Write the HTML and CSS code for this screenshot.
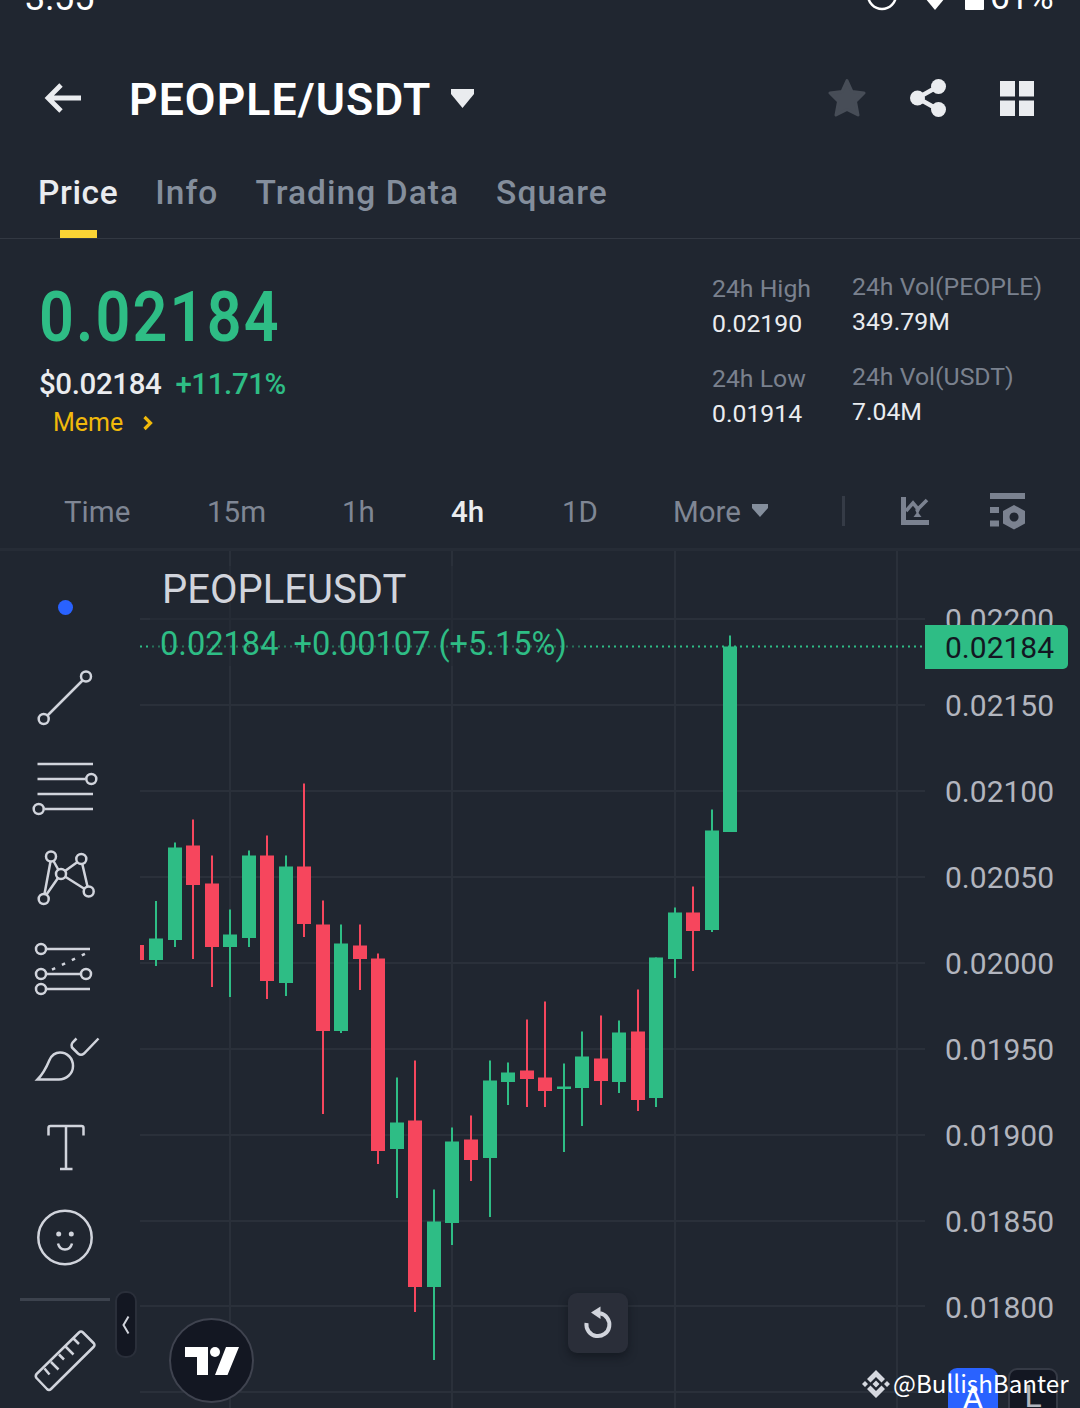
FILE: index.html
```html
<!DOCTYPE html>
<html lang="en">
<head>
    <meta charset="UTF-8">
    <meta name="viewport" content="width=device-width, initial-scale=1.0">
    <title>PEOPLE/USDT</title>
    <link rel="stylesheet" href="styles.css">
</head>
<body>
    <div class="status-bar">
        <span class="clock">3:55</span>
        <svg class="status-icons" width="120" height="12" viewBox="866 0 120 12">
            <circle cx="882" cy="-5" r="14" fill="none" stroke="#fff" stroke-width="2.5"/>
            <path d="M925 -2h20l-10 12z" fill="#fff"/>
            <path d="M965 -10h19v19q0 1-1 1h-17q-1 0-1-1z" fill="#fff"/>
        </svg>
        <span class="battery">61%</span>
    </div>

    <header class="header">
        <svg class="back" width="38" height="32" viewBox="0 0 38 32">
            <path d="M17 3L4 16l13 13M4 16h33" fill="none" stroke="#eaecef" stroke-width="4.8"/>
        </svg>
        <h1>PEOPLE/USDT</h1>
        <svg class="caret" width="23" height="19" viewBox="0 0 23 19"><path d="M0 0h23v5L11.500 19 0 5z" fill="#eaecef"/></svg>
        <div class="actions">
            <svg width="38" height="40" viewBox="0 0 38 40">
                <path d="M19 2.500l5 11 12 1.500-8.500 8.500 2.500 13.500-11-5.500-11 5.500 2.500-13.500L2 15l12-1.500z" fill="#474d57" stroke="#474d57" stroke-width="3" stroke-linejoin="round"/>
            </svg>
            <svg width="36" height="38" viewBox="0 0 36 38">
                <path d="M28 7.500L7.500 19 28 30.500" fill="none" stroke="#eaecef" stroke-width="4.500"/>
                <g fill="#eaecef"><circle cx="28.500" cy="7.500" r="7.500"/><circle cx="7.500" cy="19" r="7.500"/><circle cx="28.500" cy="30.500" r="7.500"/></g>
            </svg>
            <svg width="34" height="35" viewBox="0 0 34 35">
                <path d="M0 0h15v15.500H0zM19 0h15v15.500H19zM0 19.500h15V35H0zM19 19.500h15V35H19z" fill="#eaecef"/>
            </svg>
        </div>
    </header>

    <nav class="tabs">
        <span class="tab active">Price</span>
        <span class="tab">Info</span>
        <span class="tab">Trading Data</span>
        <span class="tab">Square</span>
    </nav>

    <section class="ticker">
        <div class="price-block">
            <div class="last-price">0.02184</div>
            <div class="sub-price"><span class="usd">$0.02184</span><span class="change">+11.71%</span></div>
            <div class="tag">Meme
                <svg width="12" height="16" viewBox="0 0 12 16"><path d="M2.500 2l6 6-6 6" fill="none" stroke="#f0b90b" stroke-width="3.200"/></svg>
            </div>
        </div>
        <div class="stats">
            <div class="label">24h High</div>
            <div class="value">0.02190</div>
            <div class="label">24h Low</div>
            <div class="value">0.01914</div>
        </div>
        <div class="stats volume">
            <div class="label">24h Vol(PEOPLE)</div>
            <div class="value">349.79M</div>
            <div class="label">24h Vol(USDT)</div>
            <div class="value">7.04M</div>
        </div>
    </section>

    <div class="intervals">
        <span>Time</span>
        <span>15m</span>
        <span>1h</span>
        <span class="active">4h</span>
        <span>1D</span>
        <span class="more">More <svg width="16" height="13" viewBox="0 0 16 13"><path d="M0 0h16v4l-8 9-8-9z" fill="#848e9c"/></svg></span>
        <i class="divider"></i>
        <svg width="28" height="28" viewBox="0 0 28 28">
            <path d="M2.500 0v25.500H28" fill="none" stroke="#7b8290" stroke-width="5"/>
            <path d="M5 14l7-8 5 6 9-9" fill="none" stroke="#7b8290" stroke-width="3.600"/>
            <path d="M14 12.500h5l-1.500 3.500 3 4h-8l3-4z" fill="#7b8290"/>
        </svg>
        <svg width="35" height="37" viewBox="0 0 35 37">
            <path d="M0 0h35v6H0zM0 14h9v6H0zM0 27.500h9v6H0z" fill="#7b8290"/>
            <path fill-rule="evenodd" d="M24 12l11 6v12.500l-11 6-11-6V18zM24 19.500a4.500 4.500 0 1 0 .1 0z" fill="#7b8290"/>
        </svg>
    </div>

    <main class="chart">
        <div class="tools">
            <div class="dot"></div>
            <!-- trend line -->
            <svg viewBox="0 0 100 90"><circle cx="43.700" cy="66" r="5"/><circle cx="86" cy="23.500" r="5"/><path d="M47.500 62.500l35-35"/></svg>
            <!-- fib retracement -->
            <svg viewBox="0 0 100 90"><path d="M37.500 21H93M37.500 36h48M37.500 51H93M44.500 66H93"/><circle cx="91.300" cy="36" r="5"/><circle cx="38.700" cy="66" r="5"/></svg>
            <!-- pattern -->
            <svg viewBox="0 0 100 90">
                <path d="M50.500 28.500L44.500 61M53.500 28l5 9M58 45L46.500 61.500M65 38l12.500-9M82.300 31l5.200 22.500M65.300 43.700l19 12"/>
                <circle cx="51" cy="23.500" r="5"/><circle cx="81.300" cy="26" r="5"/><circle cx="61" cy="41" r="5"/><circle cx="43.700" cy="66" r="5"/><circle cx="88.700" cy="58.500" r="5"/>
            </svg>
            <!-- forecast -->
            <svg viewBox="0 0 100 90">
                <path d="M46.500 26H90M46.500 51h34M46.500 66H90"/>
                <path d="M52 46.700l33.500-16" stroke-dasharray="3.500 7.500"/>
                <circle cx="41" cy="26" r="5"/><circle cx="41" cy="51" r="5"/><circle cx="86" cy="51" r="5"/><circle cx="41" cy="66" r="5"/>
            </svg>
            <!-- brush -->
            <svg viewBox="0 0 100 90">
                <path d="M37.500 66.500C43 61 47 53 49.500 47c2.500-5.500 6.500-7.500 10.500-7.500 7 0 13 5.500 13 13.500s-7 13.500-14 13.500zM76.500 25.500L73 29q-3 3.500 0 6.500l5 5q3 2.500 6 0l14.500-15"/>
            </svg>
            <!-- text -->
            <svg viewBox="0 0 100 90"><path d="M48.500 32.500V25q0-2 2-2h31q2 0 2 2v7.500M66 23v43M60 66h12.500"/></svg>
            <!-- emoji -->
            <svg viewBox="0 0 100 90">
                <circle cx="65" cy="44.500" r="26.700"/><path d="M58 50.500c2 8 12 8 14 0"/>
                <g class="eyes"><circle cx="58.700" cy="41" r="2.500"/><circle cx="71.300" cy="41" r="2.500"/></g>
            </svg>
            <hr>
            <!-- ruler -->
            <svg viewBox="0 0 100 90">
                <path d="M79 17.500q2-2 4 0l10.500 10.500q2 2 0 4L51 74q-2 2-4 0L36.500 63q-1.500-1.500 0-4zM44.500 53.500l5 6M51 47l7.500 7.500M59 39.500l5 5M66 32l7.500 7.500M74 24l5 5"/>
            </svg>
        </div>

        <div class="plot">
            <svg id="candles" width="785" height="857" viewBox="140 551 785 857"></svg>
            <div class="legend">
                <div class="symbol">PEOPLEUSDT</div>
                <div class="ohlc"><span>0.02184</span><span>+0.00107</span><span class="percent">(+5.15%)</span></div>
            </div>
            <div class="collapse"><svg width="10" height="20" viewBox="0 0 10 20"><path d="M7.500 1.500L2.500 10l5 8.500" fill="none" stroke="#d1d4dc" stroke-width="2"/></svg></div>
            <div class="tv-logo">
                <svg width="54" height="28" viewBox="0 0 54 28"><path d="M0 0h23v28H12V10H0zM41 0h13L42.500 28H30z" fill="#fff"/><circle cx="30" cy="5" r="5" fill="#fff"/></svg>
            </div>
            <div class="reset">
                <svg width="30" height="34" viewBox="0 0 30 34"><path d="M17 7.300A11.500 11.500 0 1 1 3.500 17" fill="none" stroke="#d1d4dc" stroke-width="4"/><path d="M17.500 0.500v12.500L8 6.500z" fill="#d1d4dc"/></svg>
            </div>
        </div>

        <div class="axis">
            <span>0.02200</span>
            <span>0.02150</span>
            <span>0.02100</span>
            <span>0.02050</span>
            <span>0.02000</span>
            <span>0.01950</span>
            <span>0.01900</span>
            <span>0.01850</span>
            <span>0.01800</span>
            <div class="last">0.02184</div>
            <div class="scale auto">A</div>
            <div class="scale log">L</div>
        </div>

        <div class="credit">
            <svg width="28" height="28" viewBox="0 0 28 28">
                <path d="M14 0l9 9-3.500 3.500L14 7l-5.500 5.500L5 9zM14 28l9-9-3.500-3.500L14 21l-5.500-5.500L5 19zM14 10.500l3.500 3.500-3.500 3.500-3.500-3.500zM3 11l3 3-3 3-3-3zM25 11l3 3-3 3-3-3z" fill="#d5d8df"/>
            </svg>
            <span>@BullishBanter</span>
        </div>
    </main>

    <script>
        const GREEN = '#2ebd85';
        const RED = '#f6465d';

        // [center x, wick top, wick bottom, body top, body bottom, up]
        const candles = [
            [137, 945, 960, 945, 960, 0],
            [156, 901, 966, 938.5, 960, 1],
            [175, 842.5, 947, 847.5, 940, 1],
            [193, 819.5, 959, 845.5, 885, 0],
            [212, 855.5, 987, 883.5, 947, 0],
            [230, 909.5, 997, 934.5, 947, 1],
            [249, 850.5, 947, 855.5, 938, 1],
            [267, 835.5, 999, 855.5, 981, 0],
            [286, 855.5, 996, 866.5, 983, 1],
            [304, 783.5, 937, 866.5, 924, 0],
            [323, 900.5, 1114, 924.5, 1031, 0],
            [341, 924.5, 1033, 943.5, 1031, 1],
            [360, 924.5, 990, 945.5, 959, 0],
            [378, 953.5, 1164, 958.5, 1151, 0],
            [397, 1077.5, 1198, 1122.5, 1149, 1],
            [415, 1060.5, 1312, 1120.5, 1287, 0],
            [434, 1189.5, 1360, 1221.5, 1287, 1],
            [452, 1127.5, 1245, 1141.5, 1223, 1],
            [471, 1115.5, 1181, 1139.5, 1160, 0],
            [490, 1060.5, 1217, 1080.5, 1158, 1],
            [508, 1062.5, 1105, 1072.5, 1082, 1],
            [527, 1019.5, 1107, 1070.5, 1079, 0],
            [545, 1001.5, 1107, 1077.5, 1091, 0],
            [564, 1063.5, 1152, 1086.5, 1089, 1],
            [582, 1031.5, 1126, 1056.5, 1088, 1],
            [601, 1015.5, 1105, 1058.5, 1081, 0],
            [619, 1020.5, 1093, 1032.5, 1082, 1],
            [638, 989.5, 1111, 1031.5, 1100, 0],
            [656, 957.5, 1107, 957.5, 1098, 1],
            [675, 907.5, 978, 912.5, 959, 1],
            [693, 886.5, 971, 912.5, 931, 0],
            [712, 809.5, 932, 830.5, 930, 1],
            [730, 635.5, 832, 646.5, 832, 1]
        ];

        function rect(x, y, w, h, fill) {
            return `<rect x="${x}" y="${y}" width="${w}" height="${h}" fill="${fill}"/>`;
        }

        let out = '';
        // grid
        [618, 704, 790, 876, 962, 1048, 1134, 1220, 1305, 1391].forEach(y => out += rect(140, y, 785, 2, '#2a303a'));
        [229, 451, 674, 896].forEach(x => out += rect(x, 549, 2, 859, '#2a303a'));

        candles.forEach(([x, high, low, top, bottom, up]) => {
            const color = up ? GREEN : RED;
            out += rect(x - 1, high, 2, low - high, color);
            out += rect(x - 7, top, 14, bottom - top, color);
        });

        // last price line
        out += `<path d="M140 646.5H925" stroke="${GREEN}" stroke-width="2" stroke-dasharray="2 4"/>`;
        document.getElementById('candles').innerHTML = out;
    </script>
</body>
</html>
```
FILE: styles.css
```css
* {
    box-sizing: border-box;
}

body {
    margin: 0;
    width: 1080px;
    height: 1408px;
    overflow: hidden;
    background-color: #202630;
    color: #eaecef;
    font-family: Roboto, "Liberation Sans", sans-serif;
}

svg {
    display: block;
    flex: none;
}

/* Status bar, partly scrolled off */
.status-bar {
    display: flex;
    height: 40px;
    padding-left: 25px;
    overflow: hidden;
    color: #fff;
    font-size: 36px;
    line-height: 40px;
}

.clock,
.battery {
    margin-top: -22px;
}

.clock {
    width: 841px;
}

.battery {
    margin-left: 4px;
    font-size: 35px;
    letter-spacing: -0.7px;
}

/* Header */
.header {
    display: flex;
    align-items: center;
    height: 116px;
    padding: 0 46px 0 44px;
}

.header h1 {
    margin: 4px 0 0 47px;
    width: 305px;
    color: #fff;
    font-size: 44.5px;
    font-weight: 600;
    letter-spacing: 1.1px;
}

.caret {
    margin-left: 17px;
}

.actions {
    display: flex;
    align-items: center;
    margin-left: auto;
}

.actions svg + svg {
    margin-left: 44px;
}

.actions svg + svg + svg {
    margin-left: 54px;
}

/* Tabs */
.tabs {
    display: flex;
    gap: 37px;
    height: 83px;
    padding: 16px 0 0 38px;
    border-bottom: 1px solid #323842;
    color: #848e9c;
    font-size: 33.5px;
    font-weight: 500;
    line-height: 42px;
    letter-spacing: 1.05px;
}

.tab.active {
    color: #eaecef;
    letter-spacing: 0.6px;
}

.tab.active::after {
    content: "";
    display: block;
    width: 37px;
    height: 8px;
    margin: 16px auto 0;
    background-color: #fcd535;
}

/* Price summary */
.ticker {
    display: flex;
    height: 237px;
    padding: 30px 0 0 39px;
}

.price-block {
    width: 673px;
    padding-top: 11px;
}

.last-price {
    color: #2ebd85;
    font-size: 71px;
    font-weight: 600;
    line-height: 74px;
    letter-spacing: 2.5px;
    transform: scaleX(0.86);
    transform-origin: left;
}

.sub-price {
    display: flex;
    gap: 14px;
    margin-top: 12px;
    font-size: 29.5px;
    font-weight: 500;
    line-height: 36px;
    letter-spacing: -0.4px;
}

.change {
    color: #2ebd85;
}

.tag {
    display: flex;
    align-items: center;
    gap: 19px;
    margin: 6px 0 0 14px;
    color: #f0b90b;
    font-size: 25px;
    line-height: 30px;
}

.stats {
    width: 140px;
    padding-top: 2px;
    font-size: 24.8px;
    line-height: 35px;
    white-space: nowrap;
}

.stats.volume {
    padding-top: 0;
}

.stats .label {
    color: #7a818e;
}

.stats .value + .label {
    margin-top: 20px;
}

/* Chart intervals */
.intervals {
    display: grid;
    grid-template-columns: 143px 135px 109px 111px 111px 169px 59px 89px 40px;
    align-items: center;
    height: 75px;
    padding: 0 0 2px 64px;
    border-bottom: 3px solid #262c36;
    color: #7f8694;
    font-size: 29.5px;
}

.intervals span {
    padding-top: 2px;
}

.intervals .active {
    color: #eaecef;
    font-weight: 500;
}

.more {
    display: flex;
    align-items: center;
    gap: 11px;
}

.more svg {
    margin-top: -3px;
}

.divider {
    width: 3px;
    height: 30px;
    background-color: #353b46;
}

/* Chart */
.chart {
    position: relative;
    display: flex;
    height: 857px;
}

.tools {
    width: 140px;
}

.tools svg {
    width: 100px;
    height: 90px;
    fill: none;
    stroke: #d1d4dc;
    stroke-width: 2.5;
}

.tools .eyes {
    fill: #d1d4dc;
    stroke: none;
}

.tools .dot {
    width: 15px;
    height: 15px;
    margin: 49px 0 38px 57.5px;
    border-radius: 50%;
    background-color: #2962ff;
}

.tools hr {
    width: 90px;
    height: 3px;
    margin: 15px 0 14px 20px;
    border: 0;
    background-color: #3c424d;
}

.plot {
    position: relative;
    width: 785px;
}

.legend {
    position: absolute;
    top: 15px;
    left: 10px;
    width: 430px;
    height: 100px;
    padding-left: 10px;
    background-color: rgba(32, 38, 48, 0.5);
}

.symbol {
    padding-left: 2px;
    color: #d1d4dc;
    font-size: 40px;
    line-height: 48px;
}

.ohlc {
    display: flex;
    margin-top: 10px;
    gap: 15px;
    color: #2ebd85;
    font-size: 32.6px;
    line-height: 40px;
}

.percent {
    margin-left: -7px;
}

.collapse,
.tv-logo,
.reset {
    position: absolute;
    display: flex;
    align-items: center;
    justify-content: center;
}

.collapse {
    top: 740px;
    left: -25px;
    width: 22px;
    height: 67px;
    border: 2px solid #2a2f3a;
    border-radius: 10px;
    background-color: #131722;
}

.tv-logo {
    top: 767px;
    left: 29px;
    width: 85px;
    height: 85px;
    border: 2.5px solid #3f434f;
    border-radius: 50%;
    background-color: #131722;
}

.reset {
    top: 742px;
    left: 428px;
    width: 60px;
    height: 60px;
    border-radius: 9px;
    background-color: #2a2e39;
    box-shadow: 0 4px 9px rgba(10, 13, 20, 0.5);
}

/* Price axis */
.axis {
    position: relative;
    width: 155px;
    padding: 26px 0 0 20px;
    color: #b2b5be;
    font-size: 30px;
    line-height: 86px;
}

.axis span {
    display: block;
    height: 86px;
}

.last {
    position: absolute;
    top: 74px;
    left: 0;
    width: 143px;
    height: 44px;
    padding-left: 20px;
    border-radius: 0 5px 5px 0;
    background-color: #2ebd85;
    color: #131722;
    line-height: 45px;
}

.scale {
    position: absolute;
    top: 817px;
    width: 50px;
    height: 50px;
    border-radius: 9px;
    color: #fff;
    font-size: 32px;
    line-height: 60px;
    text-align: center;
}

.auto {
    left: 23px;
    background-color: #2962ff;
}

.log {
    left: 83px;
    border: 2px solid #353a45;
    background-color: #131722;
    color: #b2b5be;
    line-height: 53px;
}

/* Author mark over the chart */
.credit {
    position: absolute;
    left: 862px;
    bottom: 8px;
    display: flex;
    align-items: center;
    gap: 3px;
    height: 32px;
    color: #fff;
    font-family: "Noto Sans CJK SC", sans-serif;
    font-size: 24.2px;
    line-height: 30px;
}

.credit span {
    margin-top: -3px;
}
```
